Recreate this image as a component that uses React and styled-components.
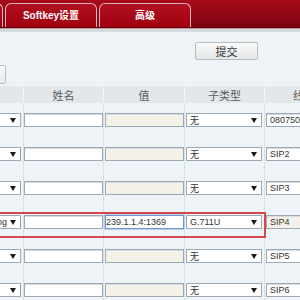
import React from "react";
import styled, { createGlobalStyle } from "styled-components";

const Global = createGlobalStyle`
  html, body { margin: 0; padding: 0; }
  body {
    width: 300px;
    height: 300px;
    overflow: hidden;
    background: #edf3f6;
    font-family: "Liberation Sans", "Noto Sans CJK SC", sans-serif;
  }
`;

const Page = styled.div`
  width: 300px;
  height: 300px;
  overflow: hidden;
  background: #edf3f6;
`;

const TabBar = styled.div`
  height: 27px;
  display: flex;
  align-items: flex-end;
  gap: 2px;
  background: linear-gradient(#a70b19, #8a0815 70%, #7a0512);
  border-bottom: 1px solid #5e000c;
  overflow: hidden;
`;

const Tab = styled.div`
  flex: 0 0 92px;
  height: 24px;
  box-sizing: border-box;
  margin-left: ${(p) => (p.$offset ? `${p.$offset}px` : "0")};
  border: 1px solid #e6b4ba;
  border-bottom: none;
  border-radius: 6px 6px 0 0;
  background: linear-gradient(#b0101f, #a2000f);
  color: #ffffff;
  font-size: 10px;
  font-weight: bold;
  display: flex;
  align-items: center;
  justify-content: center;
  padding-bottom: 2px;
`;

const PinkLine = styled.div`
  height: 1px;
  background: #c99aa0;
`;

const GreyStrip = styled.div`
  height: 3px;
  background: #d5dadc;
`;

const ButtonRow = styled.div`
  display: flex;
  padding: 10px 0 0 195px;
`;

const SubmitButton = styled.div`
  width: 63px;
  height: 18px;
  box-sizing: border-box;
  border: 1px solid #b9bcbe;
  border-radius: 2px;
  background: linear-gradient(#fbfbfb, #e4e6e7);
  color: #333;
  font-size: 11px;
  display: flex;
  align-items: center;
  justify-content: center;
`;

const SmallRow = styled.div`
  display: flex;
  padding-top: 5px;
`;

const CutButton = styled.div`
  flex: 0 0 30px;
  height: 19px;
  margin-left: -24px;
  box-sizing: border-box;
  border: 1px solid #b9bcbe;
  border-radius: 2px;
  background: linear-gradient(#fbfbfb, #e8eaeb);
`;

const Table = styled.div`
  margin-top: 2px;
  display: flex;
  flex-direction: column;
`;

const HeaderRow = styled.div`
  display: flex;
  height: 17px;
  background: #e1e7ea;
`;

const Row = styled.div`
  position: relative;
  display: flex;
  height: 34px;
  align-items: stretch;
`;

const widths = [24, 80, 81, 80, 79];

const Cell = styled.div`
  flex: 0 0 ${(p) => widths[p.$col]}px;
  min-width: 0;
  box-sizing: border-box;
  border-right: 1px solid ${(p) => (p.$head ? "#f2f5f7" : "#d9e0e4")};
  display: flex;
  align-items: center;
  justify-content: ${(p) => (p.$col === 0 ? "flex-end" : "flex-start")};
  padding-right: ${(p) => (p.$col === 0 ? "2px" : "0")};
  padding-left: ${(p) => (p.$col >= 2 ? "1px" : "0")};
`;

const HeadCell = styled(Cell)`
  justify-content: center;
  padding: 0;
  color: #5a5a5a;
  font-size: 11px;
  white-space: nowrap;
`;

const TextBox = styled.div`
  flex: 0 0 ${(p) => p.$w}px;
  height: 14px;
  box-sizing: border-box;
  border: 1px solid ${(p) => (p.$focus ? "#6f97cc" : "#9ca8b3")};
  box-shadow: ${(p) =>
    p.$focus ? "0 0 0 1px #b9cfe9" : "inset 0 1px 0 #d6dce1"};
  background: ${(p) => (p.$beige ? "#f4f2e8" : "#ffffff")};
  color: #333;
  font-size: 9px;
  line-height: 12px;
  padding-left: ${(p) => (p.$focus ? "0" : "3px")};
  white-space: nowrap;
  overflow: hidden;
`;

const SelectBox = styled.div`
  flex: 0 0 ${(p) => p.$w}px;
  height: 14px;
  box-sizing: border-box;
  border: 1px solid #9ca8b3;
  background: #ffffff;
  color: #333;
  font-size: 9px;
  display: flex;
  align-items: center;
  justify-content: space-between;
  padding: 0 4px 0 3px;
  white-space: nowrap;
`;

const Arrow = styled.span`
  width: 0;
  height: 0;
  border-left: 3px solid transparent;
  border-right: 3px solid transparent;
  border-top: 5px solid #1a1a1a;
`;

const Highlight = styled.div`
  position: absolute;
  left: -5px;
  top: 7px;
  width: 271px;
  height: 26px;
  box-sizing: border-box;
  border: 2px solid #d4474a;
  pointer-events: none;
`;

const rows = [
  { first: "无", value: "", sub: "无", line: "08075000001", lineBeige: false },
  { first: "无", value: "", sub: "无", line: "SIP2", lineBeige: false },
  { first: "无", value: "", sub: "无", line: "SIP3", lineBeige: false },
  { first: "Paging", value: "239.1.1.4:1369", sub: "G.711U", line: "SIP4", lineBeige: true, active: true },
  { first: "无", value: "", sub: "无", line: "SIP5", lineBeige: false },
  { first: "无", value: "", sub: "无", line: "SIP6", lineBeige: false },
];

export default function App() {
  return (
    <Page>
      <Global />
      <TabBar>
        <Tab $offset={-89} />
        <Tab>Softkey设置</Tab>
        <Tab>高级</Tab>
      </TabBar>
      <PinkLine />
      <GreyStrip />
      <ButtonRow>
        <SubmitButton>提交</SubmitButton>
      </ButtonRow>
      <SmallRow>
        <CutButton />
      </SmallRow>
      <Table>
        <HeaderRow>
          <HeadCell $col={0} $head />
          <HeadCell $col={1} $head>姓名</HeadCell>
          <HeadCell $col={2} $head>值</HeadCell>
          <HeadCell $col={3} $head>子类型</HeadCell>
          <HeadCell $col={4} $head>线路</HeadCell>
        </HeaderRow>
        {rows.map((r, i) => (
          <Row key={i}>
            <Cell $col={0}>
              <SelectBox $w={46}>
                <span>{r.first}</span>
                <Arrow />
              </SelectBox>
            </Cell>
            <Cell $col={1}>
              <TextBox $w={79} />
            </Cell>
            <Cell $col={2}>
              <TextBox $w={79} $beige={!r.active} $focus={r.active}>
                {r.value}
              </TextBox>
            </Cell>
            <Cell $col={3}>
              <SelectBox $w={76}>
                <span>{r.sub}</span>
                <Arrow />
              </SelectBox>
            </Cell>
            <Cell $col={4}>
              <TextBox $w={70} $beige={r.lineBeige}>
                {r.line}
              </TextBox>
            </Cell>
            {r.active && <Highlight />}
          </Row>
        ))}
      </Table>
    </Page>
  );
}
